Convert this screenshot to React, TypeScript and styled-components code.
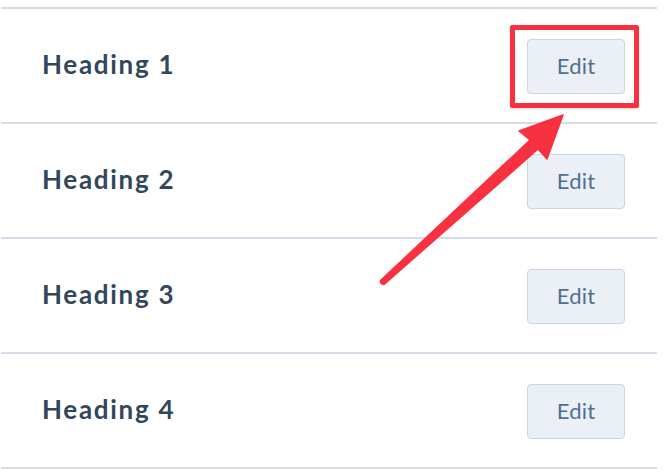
import React from "react";
import styled, { createGlobalStyle } from "styled-components";

const Global = createGlobalStyle`
  html, body { margin: 0; padding: 0; background: #ffffff; }
  body { font-family: Lato, "Open Sans", sans-serif; }
`;

const Page = styled.div`
  position: relative;
  width: 664px;
  height: 474px;
  overflow: hidden;
  padding-top: 7px;
  box-sizing: border-box;
`;

const List = styled.div`
  width: 656px;
  margin-left: 1px;
  display: flex;
  flex-direction: column;
  border-top: 2px solid #d3dde8;
`;

const Row = styled.div`
  height: 113px;
  border-bottom: 2px solid #d3dde8;
  display: flex;
  align-items: center;
  justify-content: space-between;
  padding: 0 32px 0 41px;
`;

const Title = styled.span`
  font-family: Lato, "Open Sans", sans-serif;
  font-weight: 700;
  font-size: 26px;
  color: #33475b;
  letter-spacing: 1.7px;
  margin-top: -4px;
`;

const EditButton = styled.button`
  width: 98px;
  height: 55px;
  box-sizing: border-box;
  background: #eaf0f6;
  border: 1px solid #cbd6e2;
  border-radius: 4px;
  color: #516f90;
  font-family: Lato, "Open Sans", sans-serif;
  font-size: 22px;
  font-weight: 400;
  letter-spacing: 0.2px;
  padding: 0 0 2px;
  margin-top: 1px;
`;

const Highlight = styled.div`
  position: absolute;
  left: 510px;
  top: 25px;
  width: 129px;
  height: 83px;
  box-sizing: border-box;
  border: 5px solid #f7313f;
  border-radius: 2px;
  box-shadow: 0 1px 3px rgba(0, 0, 0, 0.15);
`;

const Arrow = styled.svg`
  position: absolute;
  left: 0;
  top: 0;
  pointer-events: none;
`;

const headings = ["Heading 1", "Heading 2", "Heading 3", "Heading 4"];

export default function App() {
  return (
    <>
      <Global />
      <Page>
        <List>
          {headings.map((h) => (
            <Row key={h}>
              <Title>{h}</Title>
              <EditButton>Edit</EditButton>
            </Row>
          ))}
        </List>
        <Highlight />
        <Arrow width="664" height="474" viewBox="0 0 664 474">
          <path
            d="M563 115 L519 131 L530 140 L380.5 280.5 Q380 284 384 284.5 L538 149 L547 159 Z"
            fill="#f7313f"
            stroke="#f7313f"
            strokeWidth="1.5"
            strokeLinejoin="round"
          />
        </Arrow>
      </Page>
    </>
  );
}
